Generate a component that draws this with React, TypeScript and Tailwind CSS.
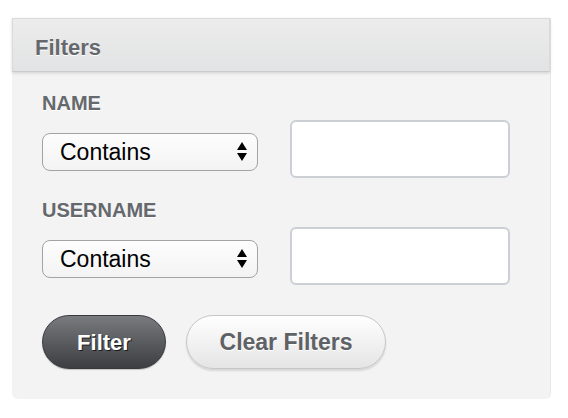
import React from "react";

const fieldLabels = ["NAME", "USERNAME"];

function SelectArrows() {
  return (
    <svg width="10" height="20" viewBox="0 0 10 20" className="shrink-0">
      <path d="M5 0 L10 8 L0 8 Z" fill="#000" />
      <path d="M0 11 L10 11 L5 19 Z" fill="#000" />
    </svg>
  );
}

function FilterRow({ label }: { label: string }) {
  return (
    <div className="flex items-start">
      <div className="w-[216px]">
        <div className="text-[20px] leading-[22px] font-bold text-[#65686c] [text-shadow:0_1px_0_#fff]">
          {label}
        </div>
        <div className="mt-[19px] h-[38px] rounded-[8px] border-[1.5px] border-[#a3a3a3] bg-linear-to-b from-[#fdfdfd] to-[#f3f3f3] flex items-center justify-between pl-[17px] pr-[10px]">
          <span className="text-[23px] text-black leading-none">Contains</span>
          <SelectArrows />
        </div>
      </div>
      <input
        type="text"
        className="ml-[32px] mt-[28px] w-[220px] h-[58px] rounded-[6px] border-2 border-[#ccd0d4] bg-white outline-none"
      />
    </div>
  );
}

export default function App() {
  return (
    <div className="w-[568px] h-[418px] bg-white pt-[18px] pl-[12px] [font-family:'Liberation_Sans',Arial,sans-serif]">
      <div className="w-[539px] h-[381px] rounded-b-[6px] bg-[#f3f3f3] border-r border-[#e8e8e8]">
        <div className="h-[54px] flex items-center pt-[4px] px-[22px] bg-linear-to-b from-[#ececec] to-[#e2e3e4] border border-[#dadada] border-b-[#cbcbcb] shadow-[0_1px_3px_rgba(0,0,0,0.15)]">
          <span className="text-[22px] font-bold text-[#65686c] [text-shadow:0_1px_0_#fff]">
            Filters
          </span>
        </div>
        <div className="pl-[30px] pt-[20px] flex flex-col gap-[21px]">
          {fieldLabels.map((l) => (
            <FilterRow key={l} label={l} />
          ))}
        </div>
        <div className="pl-[30px] mt-[30px] flex items-center gap-[20px]">
          <button className="w-[124px] h-[54px] rounded-full border border-[#383a3d] bg-linear-to-b from-[#797b7f] to-[#3c3e42] text-white text-[22px] font-bold [text-shadow:1px_1px_0_#1a1a1a] shadow-[0_1px_1px_rgba(0,0,0,0.2)]">
            Filter
          </button>
          <button className="w-[200px] h-[54px] rounded-full border border-[#c6c6c6] bg-linear-to-b from-[#ffffff] to-[#e5e5e5] text-[#5e6165] text-[23px] font-bold [text-shadow:0_1px_0_#fff] shadow-[0_2px_2px_rgba(0,0,0,0.12)]">
            Clear Filters
          </button>
        </div>
      </div>
    </div>
  );
}
